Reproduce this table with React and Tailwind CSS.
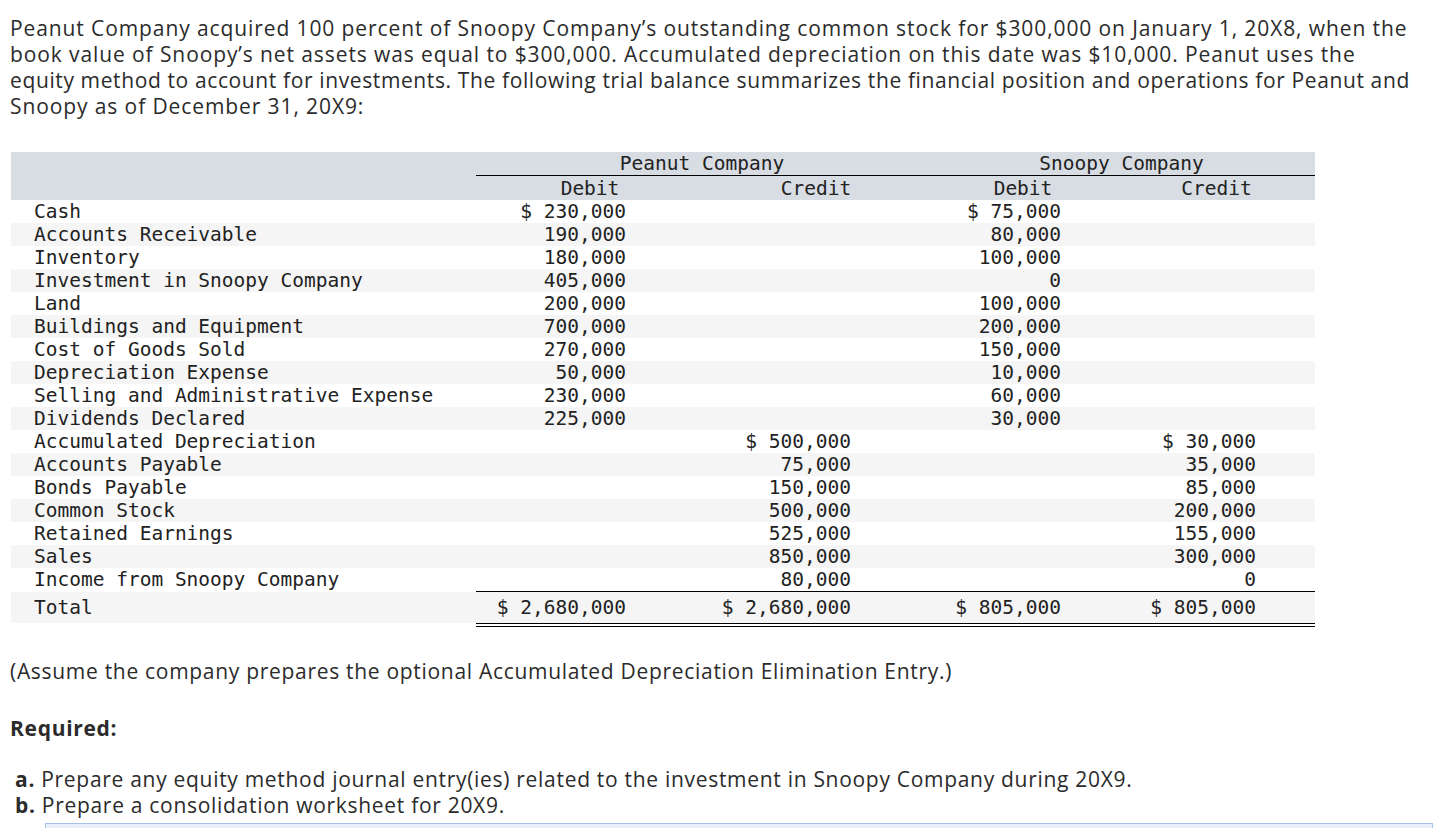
import React from 'react';

const rows = [
  ['Cash', '$ 230,000', '', '$ 75,000', ''],
  ['Accounts Receivable', '190,000', '', '80,000', ''],
  ['Inventory', '180,000', '', '100,000', ''],
  ['Investment in Snoopy Company', '405,000', '', '0', ''],
  ['Land', '200,000', '', '100,000', ''],
  ['Buildings and Equipment', '700,000', '', '200,000', ''],
  ['Cost of Goods Sold', '270,000', '', '150,000', ''],
  ['Depreciation Expense', '50,000', '', '10,000', ''],
  ['Selling and Administrative Expense', '230,000', '', '60,000', ''],
  ['Dividends Declared', '225,000', '', '30,000', ''],
  ['Accumulated Depreciation', '', '$ 500,000', '', '$ 30,000'],
  ['Accounts Payable', '', '75,000', '', '35,000'],
  ['Bonds Payable', '', '150,000', '', '85,000'],
  ['Common Stock', '', '500,000', '', '200,000'],
  ['Retained Earnings', '', '525,000', '', '155,000'],
  ['Sales', '', '850,000', '', '300,000'],
  ['Income from Snoopy Company', '', '80,000', '', '0'],
];

const TrialBalance = () => {
  return (
    <table className="ml-[11px] mt-[33px] w-[1304px] table-fixed border-separate border-spacing-0 text-[19.5px] leading-[23px] tracking-normal text-[#222] font-['DejaVu_Sans_Mono',monospace]">
      <colgroup>
        <col className="w-[465px]" />
        <col className="w-[228px]" />
        <col className="w-[224px]" />
        <col className="w-[190px]" />
        <col className="w-[197px]" />
      </colgroup>
      <thead>
        <tr className="bg-[#d8dce3]">
          <th className="h-[23px]"></th>
          <th colSpan={2} className="h-[23px] p-0 font-normal text-center border-b border-black">Peanut Company</th>
          <th colSpan={2} className="h-[23px] p-0 font-normal text-center border-b border-black">Snoopy Company</th>
        </tr>
        <tr className="bg-[#d8dce3]">
          <th className="h-[24px]"></th>
          <th className="h-[24px] p-0 font-normal text-center">Debit</th>
          <th className="h-[24px] p-0 font-normal text-center">Credit</th>
          <th className="h-[24px] p-0 font-normal text-center">Debit</th>
          <th className="h-[24px] p-0 font-normal text-center">Credit</th>
        </tr>
      </thead>
      <tbody>
        {rows.map((r, idx) => (
          <tr key={idx} className={idx % 2 === 1 ? 'bg-[#f5f5f5]' : 'bg-white'}>
            <td className="h-[23px] p-0 pl-[23px] whitespace-nowrap">{r[0]}</td>
            <td className="p-0 pr-[78px] text-right">{r[1]}</td>
            <td className="p-0 pr-[77px] text-right">{r[2]}</td>
            <td className="p-0 pr-[57px] text-right">{r[3]}</td>
            <td className="p-0 pr-[59px] text-right">{r[4]}</td>
          </tr>
        ))}
        <tr>
          <td className="h-[36px] p-0 pl-[23px] bg-[#f5f5f5] bg-clip-padding border-t border-b-4 border-transparent">Total</td>
          <td className="p-0 pr-[78px] text-right bg-[#f5f5f5] bg-clip-padding border-t border-b-4 border-double border-black">$ 2,680,000</td>
          <td className="p-0 pr-[77px] text-right bg-[#f5f5f5] bg-clip-padding border-t border-b-4 border-double border-black">$ 2,680,000</td>
          <td className="p-0 pr-[57px] text-right bg-[#f5f5f5] bg-clip-padding border-t border-b-4 border-double border-black">$ 805,000</td>
          <td className="p-0 pr-[59px] text-right bg-[#f5f5f5] bg-clip-padding border-t border-b-4 border-double border-black">$ 805,000</td>
        </tr>
      </tbody>
    </table>
  );
};

export default function App() {
  return (
    <div className="min-h-screen bg-white text-[#2b2b2b] font-['Open_Sans',sans-serif] text-[21px] leading-[26px] tracking-[0.9px] overflow-hidden">
      <p className="pl-[10px] pt-[15px]">
        Peanut Company acquired 100 percent of Snoopy Company’s outstanding common stock for $300,000 on January 1, 20X8, when the
        <br />
        book value of Snoopy’s net assets was equal to $300,000. Accumulated depreciation on this date was $10,000. Peanut uses the
        <br />
        <span className="tracking-[0.62px]">
          equity method to account for investments. The following trial balance summarizes the financial position and operations for Peanut and
        </span>
        <br />
        Snoopy as of December 31, 20X9:
      </p>

      <TrialBalance />

      <div className="tracking-[0.7px]">
        <p className="pl-[10px] mt-[31px]">
          (Assume the company prepares the optional Accumulated Depreciation Elimination Entry.)
        </p>

        <p className="pl-[10px] mt-[31px] font-bold">Required:</p>

        <div className="pl-[15px] mt-[25px]">
          <p><span className="font-bold">a.</span> Prepare any equity method journal entry(ies) related to the investment in Snoopy Company during 20X9.</p>
          <p><span className="font-bold">b.</span> Prepare a consolidation worksheet for 20X9.</p>
        </div>
      </div>

      <div className="ml-[45px] mr-[15px] mt-[5px] h-[60px] bg-[#e7effa] border border-[#a9c3e8]"></div>
    </div>
  );
}
